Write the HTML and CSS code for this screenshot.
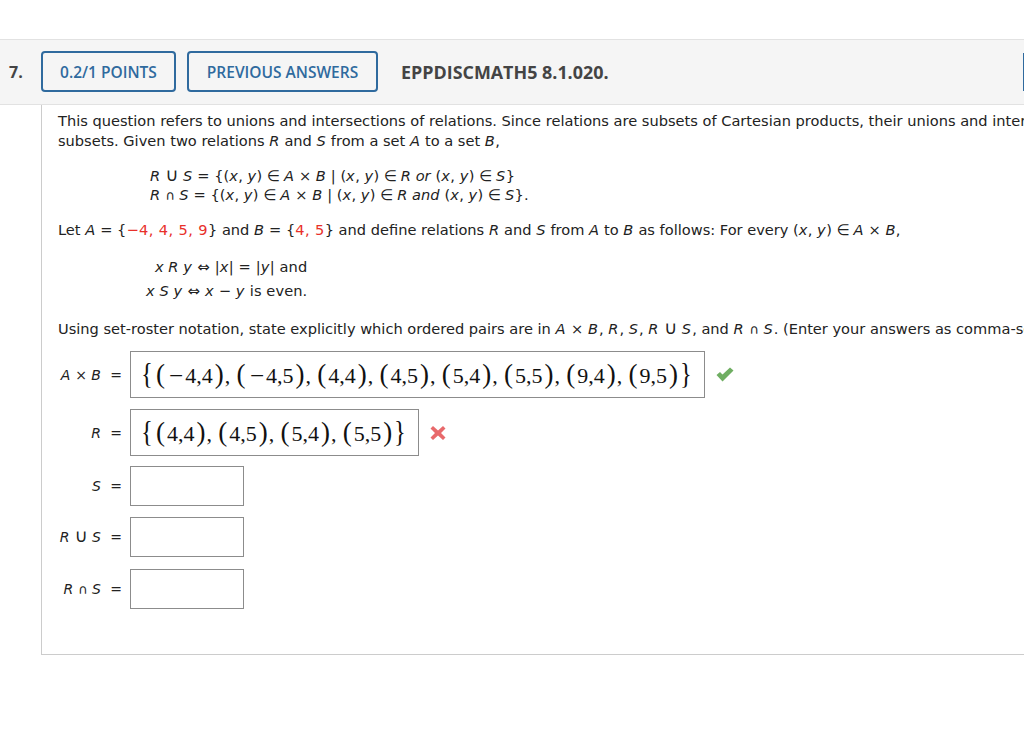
FILE: index.html
```html
<!DOCTYPE html>
<html lang="en">
<head>
<meta charset="utf-8">
<title>Question 7</title>
<link rel="stylesheet" href="styles.css">
</head>
<body>
<main class="question">
  <header class="bar">
    <span class="num">7.</span>
    <span class="pill pill-points">0.2/1 POINTS</span>
    <span class="pill pill-prev">PREVIOUS ANSWERS</span>
    <span class="code">EPPDISCMATH5 8.1.020.</span>
    <span class="edge"></span>
  </header>
  <section class="body">
    <p class="intro">This question refers to unions and intersections of relations. Since relations are subsets of Cartesian products, their unions and intersections are<br>subsets. Given two relations <i>R</i> and <i>S</i> from a set <i>A</i> to a set <i>B</i>,</p>
    <div class="defs">
      <div><i>R</i> <span class="cup">∪</span> <i>S</i> = {(<i>x</i>, <i>y</i>) <span class="in">∈</span><i>A</i> × <i>B</i> | (<i>x</i>, <i>y</i>) <span class="in">∈</span><i>R or</i> (<i>x</i>, <i>y</i>) <span class="in">∈</span><i>S</i>}</div>
      <div><i>R</i> <span class="cap">∩</span> <i>S</i> = {(<i>x</i>, <i>y</i>) <span class="in">∈</span><i>A</i> × <i>B</i> | (<i>x</i>, <i>y</i>) <span class="in">∈</span><i>R and</i> (<i>x</i>, <i>y</i>) <span class="in">∈</span><i>S</i>}.</div>
    </div>
    <p class="let">Let <i>A</i> = {<span class="red">−4, 4, 5, 9</span>} and <i>B</i> = {<span class="red">4, 5</span>} and define relations <i>R</i> and <i>S</i> from <i>A</i> to <i>B</i> as follows: For every (<i>x</i>, <i>y</i>) <span class="in">∈</span><i>A</i> × <i>B</i>,</p>
    <div class="rules">
      <div><i>x R y</i> <span class="iff">⇔</span> |<i>x</i>| = |<i>y</i>| and</div>
      <div><i>x S y</i> <span class="iff">⇔</span> <i>x</i> − <i>y</i> is even.</div>
    </div>
    <p class="using">Using set-roster notation, state explicitly which ordered pairs are in <i>A</i> × <i>B</i>, <i>R</i>, <i>S</i>, <i>R</i> <span class="cup">∪</span> <i>S</i>, and <i>R</i> <span class="cap">∩</span> <i>S</i>. (Enter your answers as comma-separated lists.)</p>
    <div class="answers">
      <div class="row">
        <span class="label"><i>A</i> × <i>B</i> &nbsp;=</span>
        <span class="box box-math"><span class="brace">{</span><span class="pair"><b>(</b><span class="minus">−</span>4,4<b>)</b><span class="comma">,</span></span><span class="pair"><b>(</b><span class="minus">−</span>4,5<b>)</b><span class="comma">,</span></span><span class="pair"><b>(</b>4,4<b>)</b><span class="comma">,</span></span><span class="pair"><b>(</b>4,5<b>)</b><span class="comma">,</span></span><span class="pair"><b>(</b>5,4<b>)</b><span class="comma">,</span></span><span class="pair"><b>(</b>5,5<b>)</b><span class="comma">,</span></span><span class="pair"><b>(</b>9,4<b>)</b><span class="comma">,</span></span><span class="pair pair-last"><b>(</b>9,5<b>)</b></span><span class="brace">}</span></span>
        <svg class="mark" width="18" height="15" viewBox="0 0 18 15"><path d="M.5 8 L4 5 L6.5 7.5 L14 .5 L17.5 3.5 L6.5 14.5 Z" fill="#6fae62"/></svg>
      </div>
      <div class="row row-tight">
        <span class="label"><i>R</i> &nbsp;=</span>
        <span class="box box-math"><span class="brace">{</span><span class="pair"><b>(</b>4,4<b>)</b><span class="comma">,</span></span><span class="pair"><b>(</b>4,5<b>)</b><span class="comma">,</span></span><span class="pair"><b>(</b>5,4<b>)</b><span class="comma">,</span></span><span class="pair pair-last"><b>(</b>5,5<b>)</b></span><span class="brace">}</span></span>
        <svg class="mark" width="16" height="16" viewBox="0 0 16 16"><path d="M3 1 L8 5.5 L13 1 L15.5 3.5 L11 8 L15.5 12.5 L13 15 L8 10.5 L3 15 L.5 12.5 L5 8 L.5 3.5 Z" fill="#e8696b"/></svg>
      </div>
      <div class="row"><span class="label"><i>S</i> &nbsp;=</span><span class="box box-empty"></span></div>
      <div class="row row-loose"><span class="label"><i>R</i> <span class="cup">∪</span> <i>S</i> &nbsp;=</span><span class="box box-empty"></span></div>
      <div class="row"><span class="label"><i>R</i> <span class="cap">∩</span> <i>S</i> &nbsp;=</span><span class="box box-empty"></span></div>
    </div>
  </section>
</main>
</body>
</html>
```
FILE: styles.css
```css
html, body {
  margin: 0;
  padding: 0;
  height: 734px;
  overflow: hidden;
  background: #fff;
}
.question {
  padding-top: 39px;
  width: 1024px;
  overflow: hidden;
  font-family: "DejaVu Sans", sans-serif;
  font-size: 14.6px;
  line-height: 20px;
  color: #222;
}
.bar {
  box-sizing: border-box;
  height: 66px;
  padding-bottom: 1px;
  display: flex;
  align-items: center;
  background: #f5f5f5;
  border-top: 1px solid #e2e2e2;
  border-bottom: 1px solid #e2e2e2;
  font-family: "Open Sans", sans-serif;
  white-space: nowrap;
}
.num {
  width: 41px;
  box-sizing: border-box;
  padding-left: 9px;
  font-size: 16px;
  font-weight: 700;
  color: #444;
}
.pill {
  box-sizing: border-box;
  height: 41px;
  display: flex;
  align-items: center;
  justify-content: center;
  border: 2px solid #2f6a9e;
  border-radius: 4px;
  font-size: 15.5px;
  font-weight: 600;
  color: #2f6a9e;
}
.pill-points { width: 135px; margin-right: 11px; }
.pill-prev { width: 191px; margin-right: 23px; }
.code {
  flex: 1;
  font-size: 17.9px;
  font-weight: 700;
  color: #444;
}
.edge {
  width: 1px;
  height: 38px;
  background: #2f6a9e;
}
.body {
  box-sizing: border-box;
  height: 550px;
  padding: 6px 0 0 16px;
  margin-left: 41px;
  border-left: 1px solid #ccc;
  border-bottom: 1px solid #ccc;
  white-space: nowrap;
}
.body p { margin: 0; }
.body i { margin-right: .4px; }
.body .using i { margin-right: 1px; }
.red { color: #e8302a; letter-spacing: .4px; }
.cup, .in, .cap, .iff { line-height: 0; }
.cup { font-size: 18px; }
.in { font-size: 15px; margin-right: 4px; }
.cap { font-size: 13px; }
.iff { font-size: 15px; }
.defs {
  margin: 15px 0 0 92px;
  line-height: 19px;
}
.body .let { margin-top: 16px; }
.rules {
  width: fit-content;
  margin: 15px 0 0 88px;
  line-height: 24px;
  text-align: right;
  letter-spacing: .1px;
}
.body .using { margin-top: 16px; }
.answers {
  margin: 12px 0 0 -16px;
  display: flex;
  flex-direction: column;
}
.row {
  display: flex;
  align-items: center;
  margin-bottom: 11px;
}
.row-tight { margin-bottom: 10px; }
.row-loose { margin-bottom: 12px; }
.label {
  width: 80px;
  margin-right: 8px;
  text-align: right;
  font-size: 14px;
}
.box {
  box-sizing: border-box;
  border: 1px solid #8c8c8c;
  background: #fff;
}
.box-empty {
  width: 114px;
  height: 40px;
}
.box-math {
  height: 47px;
  padding: 0 9px;
  display: flex;
  align-items: center;
  font-family: "Liberation Serif", serif;
  font-size: 22px;
  color: #111;
}
.brace {
  font-size: 29px;
  line-height: 40px;
  margin-top: -3px;
  margin-right: 2px;
  transform: scaleX(.85);
}
.pair {
  margin-right: 6.25px;
  white-space: nowrap;
}
.pair-last { margin-right: 1px; }
.pair b {
  font-weight: 400;
  font-size: 27px;
  line-height: 20px;
  margin-right: 2px;
}
.pair b:last-of-type { margin: 0 0 0 2px; }
.comma { margin-left: 1px; }
.minus {
  display: inline-block;
  margin: 0 3px;
  transform: scaleX(1.15);
}
.mark { margin-left: 11px; }
```
